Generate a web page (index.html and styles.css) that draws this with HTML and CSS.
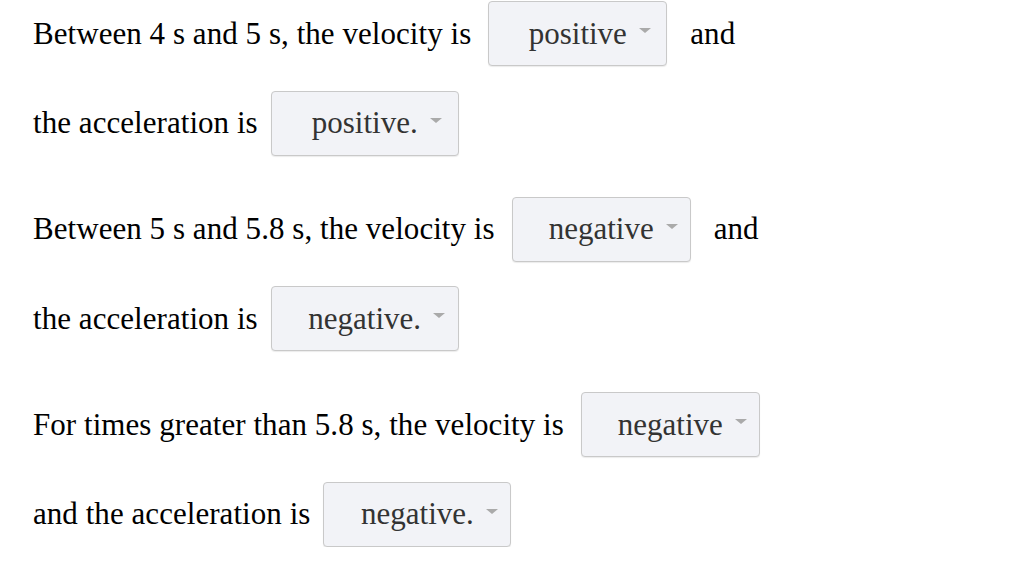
FILE: index.html
```html
<!DOCTYPE html>
<html>
<head>
<meta charset="utf-8">
<link rel="stylesheet" href="styles.css">
</head>
<body>
<div class="page">
  <div class="para">
    <div class="row">
      <span class="txt">Between 4 s and 5 s, the velocity is</span>
      <span class="sel"><span class="val">positive</span><span class="caret"></span></span>
      <span class="txt and">and</span>
    </div>
    <div class="row">
      <span class="txt">the acceleration is</span>
      <span class="sel wide"><span class="val">positive.</span><span class="caret"></span></span>
    </div>
  </div>
  <div class="para">
    <div class="row">
      <span class="txt">Between 5 s and 5.8 s, the velocity is</span>
      <span class="sel"><span class="val">negative</span><span class="caret"></span></span>
      <span class="txt and">and</span>
    </div>
    <div class="row">
      <span class="txt">the acceleration is</span>
      <span class="sel wide"><span class="val">negative.</span><span class="caret"></span></span>
    </div>
  </div>
  <div class="para">
    <div class="row">
      <span class="txt">For times greater than 5.8 s, the velocity is</span>
      <span class="sel"><span class="val">negative</span><span class="caret"></span></span>
    </div>
    <div class="row">
      <span class="txt">and the acceleration is</span>
      <span class="sel wide"><span class="val">negative.</span><span class="caret"></span></span>
    </div>
  </div>
</div>
</body>
</html>
```
FILE: styles.css
```css
html, body {
  margin: 0;
  padding: 0;
  background: #ffffff;
}
.page {
  padding: 1px 0 0 33px;
  font-family: "Liberation Serif", "Times New Roman", serif;
  font-size: 31px;
  color: #000;
  display: flex;
  flex-direction: column;
  gap: 41px;
}
.para {
  display: flex;
  flex-direction: column;
  gap: 24.5px;
}
.row {
  display: flex;
  align-items: baseline;
}
.txt {
  white-space: nowrap;
  letter-spacing: 0.05px;
}
.and {
  margin-left: 23px;
}
.sel {
  box-sizing: border-box;
  display: inline-flex;
  align-items: center;
  justify-content: center;
  height: 65px;
  width: 179px;
  margin-left: 17px;
  padding-left: 24px;
  border: 1px solid #c9c9c9;
  border-radius: 4px;
  background: #f2f3f7;
  box-shadow: 0 1px 1px rgba(0, 0, 0, 0.08);
  color: #333;
}
.sel.wide {
  width: 188px;
  margin-left: 13px;
}
.caret {
  width: 0;
  height: 0;
  margin-left: 12px;
  margin-bottom: 6px;
  border-left: 6px solid transparent;
  border-right: 6px solid transparent;
  border-top: 5px solid #aaa;
}
```
